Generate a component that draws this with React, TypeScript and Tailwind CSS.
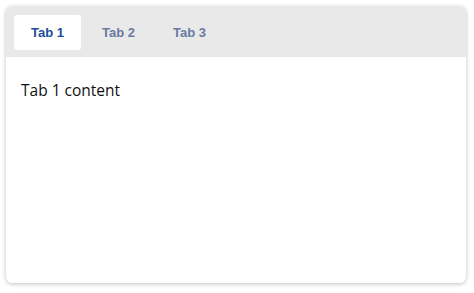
import { useState } from "react";

const tabs = [
  { id: "tab1", label: "Tab 1", content: "Tab 1 content" },
  { id: "tab2", label: "Tab 2", content: "Tab 2 content" },
  { id: "tab3", label: "Tab 3", content: "Tab 3 content" },
];

export default function App() {
  const [active, setActive] = useState("tab1");
  const current = tabs.find((t) => t.id === active);

  return (
    <div className="w-[474px] h-[293px] bg-white pt-[6px] pl-[6px]">
      <div className="w-[460px] h-[277px] flex flex-col rounded-md bg-white overflow-hidden shadow-[0_1px_4px_rgba(0,0,0,0.25)]">
        {/* Tab bar */}
        <div className="flex gap-1 bg-[#e9e9e9] pl-2 pt-[9px] pb-[7px]">
          {tabs.map((tab) => (
            <button
              key={tab.id}
              onClick={() => setActive(tab.id)}
              className={`h-[35px] px-[17px] rounded-[3px] text-[13px] font-bold font-['Liberation_Sans',Arial,sans-serif] ${
                tab.id === active
                  ? "bg-white text-[#1e4d9b]"
                  : "text-[#6a7ba1]"
              }`}
            >
              {tab.label}
            </button>
          ))}
        </div>

        {/* Panel */}
        <div className="flex-1 px-[15px] pt-[22px] text-[15.5px] text-[#111] font-['Open_Sans',sans-serif]">
          {current?.content}
        </div>
      </div>
    </div>
  );
}
